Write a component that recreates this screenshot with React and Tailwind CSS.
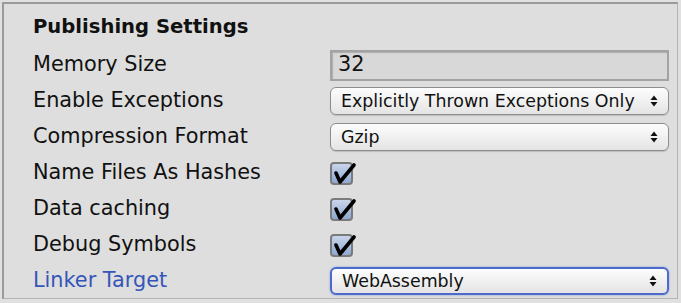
import React from "react";

const font = { fontFamily: '"DejaVu Sans", "Liberation Sans", sans-serif' };

function Arrows() {
  return (
    <svg width="8" height="12" viewBox="0 0 8 12" className="shrink-0">
      <path d="M4 0.5 L7.5 5 L0.5 5 Z" fill="#111" />
      <path d="M4 11.5 L7.5 7 L0.5 7 Z" fill="#111" />
    </svg>
  );
}

function Select({ value, focused }) {
  return (
    <div
      className={
        "flex h-[28px] w-[339px] items-center justify-between rounded-[6px] bg-gradient-to-b from-[#fdfdfd] to-[#e4e4e4] pl-[10px] pr-[10px] text-[17.4px] text-[#111] " +
        (focused
          ? "border-2 border-[#4c6acb] shadow-[0_0_2px_#7c95e0]"
          : "border border-[#8d8d8d] shadow-[0_1px_1px_rgba(0,0,0,0.15)]")
      }
    >
      <span>{value}</span>
      <Arrows />
    </div>
  );
}

function Check() {
  return (
    <div className="relative h-[23px] w-[23px] rounded-[4px] border-2 border-[#7b7b7b] bg-gradient-to-b from-[#c9d5ea] to-[#8fa7d2]">
      <svg
        width="28"
        height="26"
        viewBox="0 0 28 26"
        className="absolute left-[-2px] top-[-2px]"
      >
        <path
          d="M6 11 L10 20 L24 3"
          fill="none"
          stroke="#000"
          strokeWidth="3.6"
          strokeLinecap="round"
          strokeLinejoin="round"
        />
      </svg>
    </div>
  );
}

function Row({ label, blue, children }) {
  return (
    <div className="flex h-[36px] items-center">
      <div
        className={
          "w-[297px] text-[20.8px] " + (blue ? "text-[#3556b8]" : "text-[#111]")
        }
      >
        {label}
      </div>
      {children}
    </div>
  );
}

export default function App() {
  return (
    <div className="h-[303px] w-[681px] bg-[#e0e0e0] pl-[2px] pt-[2px]" style={font}>
      <div className="h-[297px] w-[676px] border-l-2 border-t-2 border-r border-b border-l-[#9a9a9a] border-t-[#9a9a9a] border-r-[#b4b4b4] border-b-[#b4b4b4] bg-[#dedede] pl-[29px] pt-[9px]">
        <div className="mb-[6px] h-[28px] text-[19.6px] font-bold leading-[28px] text-[#111]">
          Publishing Settings
        </div>
        <Row label="Memory Size">
          <div className="flex h-[31px] w-[339px] items-center border-2 border-[#a3a3a3] bg-[#d8d8d8] pl-[6px] text-[20.8px] text-[#111] shadow-[inset_1px_1px_1px_rgba(0,0,0,0.2)]">
            32
          </div>
        </Row>
        <Row label="Enable Exceptions">
          <Select value="Explicitly Thrown Exceptions Only" />
        </Row>
        <Row label="Compression Format">
          <Select value="Gzip" />
        </Row>
        <Row label="Name Files As Hashes">
          <Check />
        </Row>
        <Row label="Data caching">
          <Check />
        </Row>
        <Row label="Debug Symbols">
          <Check />
        </Row>
        <Row label="Linker Target" blue>
          <Select value="WebAssembly" focused />
        </Row>
      </div>
    </div>
  );
}
